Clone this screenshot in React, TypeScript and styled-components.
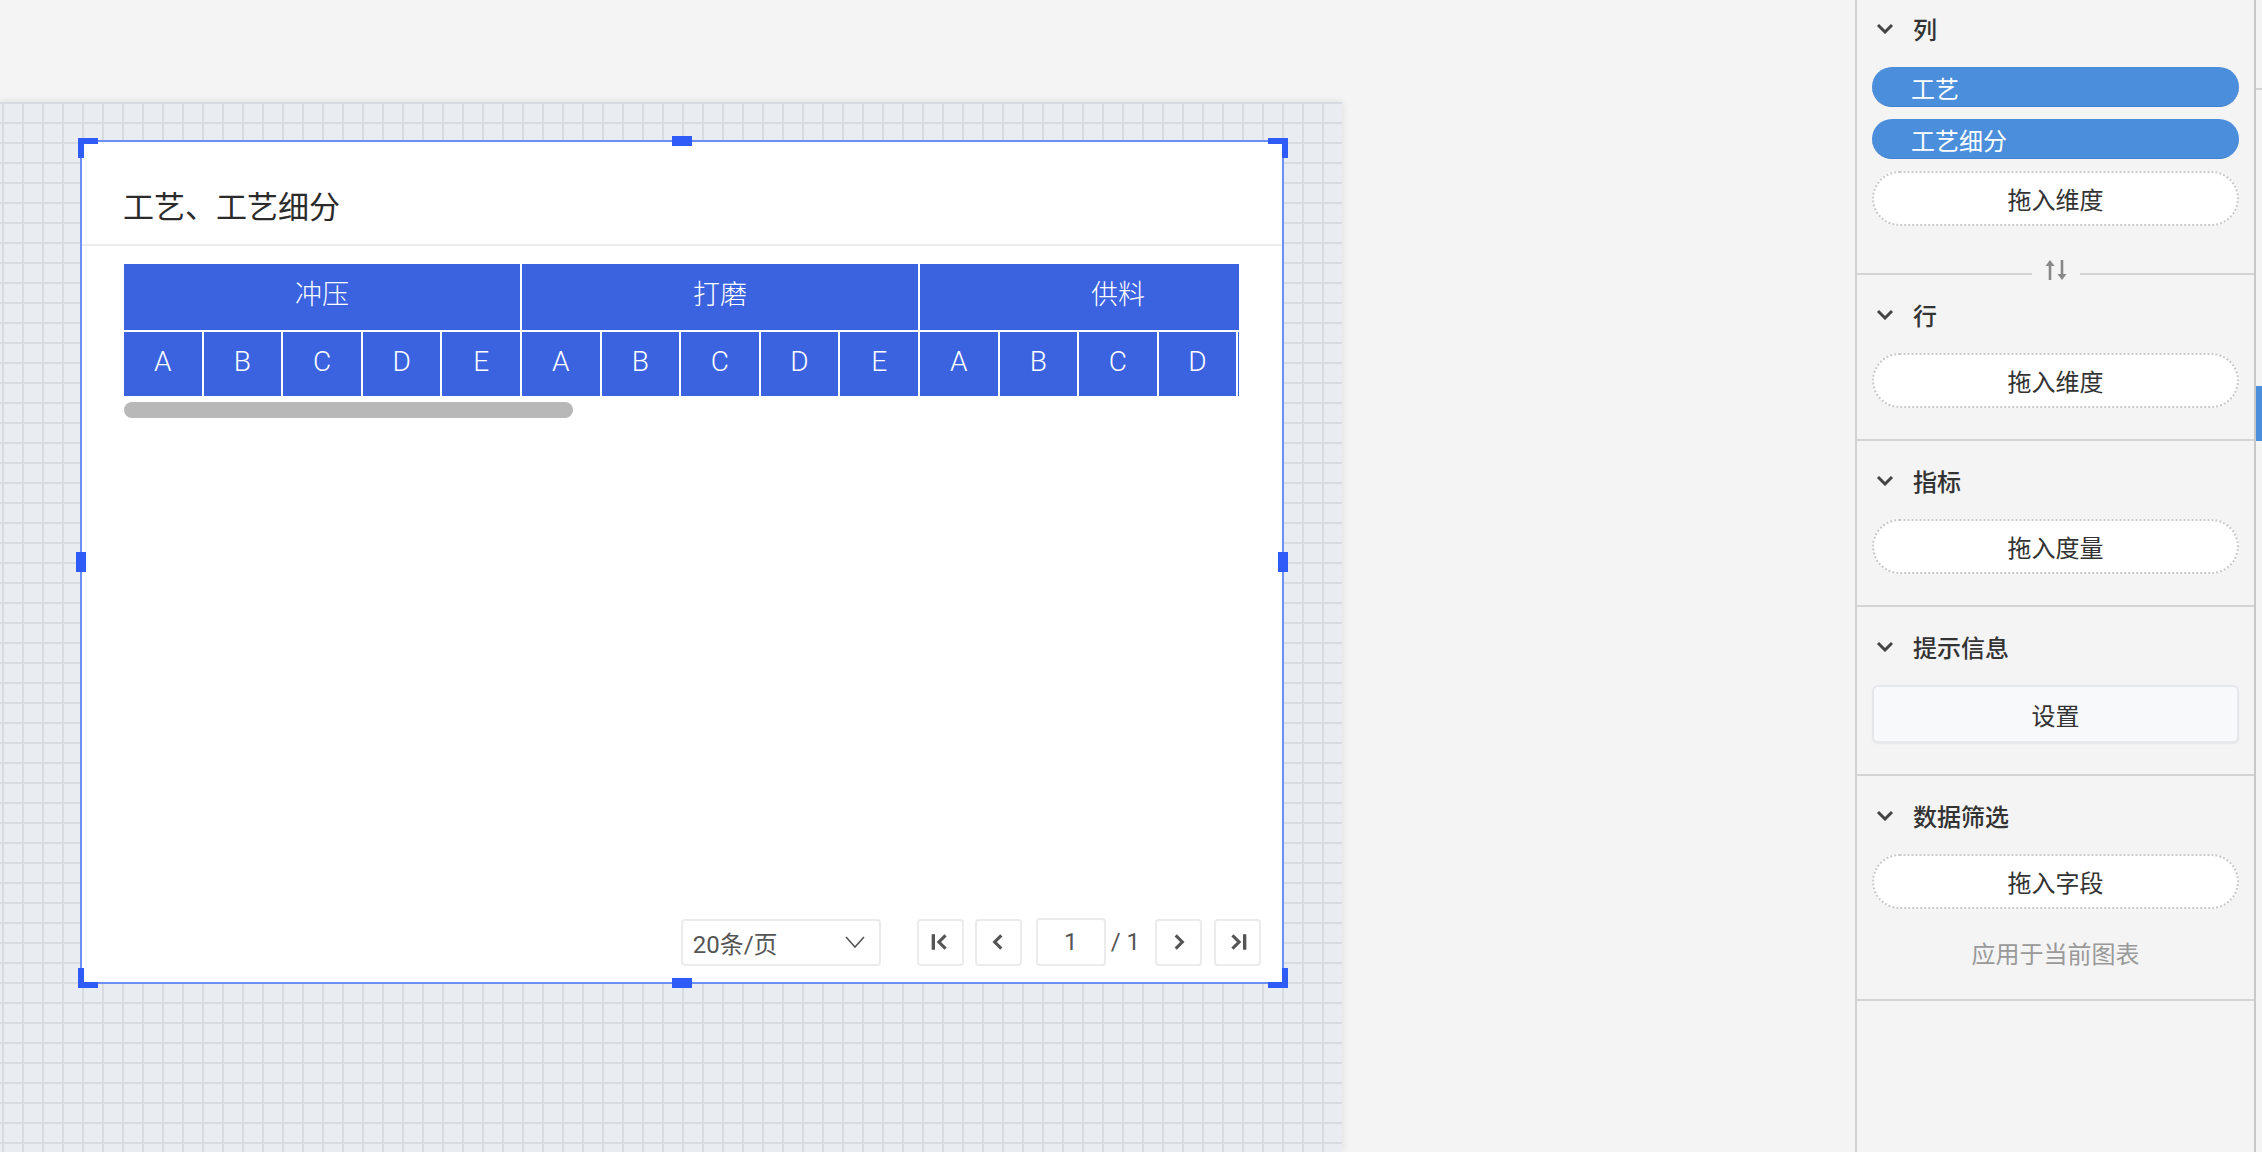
import styled, { createGlobalStyle } from 'styled-components'

const GlobalStyle = createGlobalStyle`
  html, body {
    margin: 0;
    padding: 0;
    background: #f4f4f4;
    font-family: Roboto, "Noto Sans CJK SC", sans-serif;
  }
  * {
    box-sizing: border-box;
  }
`

const Page = styled.div`
  display: flex;
  width: 2262px;
  height: 1152px;
  overflow: hidden;
  background: #f4f4f4;
`

const Workspace = styled.div`
  display: flex;
  flex-direction: column;
  width: 1855px;
`

const TopGap = styled.div`
  height: 102px;
  flex-shrink: 0;
`

const Canvas = styled.div`
  flex: 1;
  width: 1342px;
  padding: 38px 0 0 80px;
  background-color: #e9edf1;
  background-image: linear-gradient(to right, #d8dce1 2px, transparent 2px),
    linear-gradient(to bottom, #d8dce1 2px, transparent 2px);
  background-size: 20px 20px;
  background-position: 2px 0;
  box-shadow: 0 0 8px rgba(0, 0, 0, 0.1);
`

const Widget = styled.div`
  position: relative;
  display: flex;
  flex-direction: column;
  width: 1204px;
  height: 844px;
  background: #fff;
  border: 2px solid #6c8ef5;
`

const Corner = styled.div<{ $v: 'top' | 'bottom'; $h: 'left' | 'right' }>`
  position: absolute;
  width: 20px;
  height: 20px;
  ${({ $v }) => ($v === 'top' ? 'top: -4px;' : 'bottom: -6px;')}
  ${({ $h }) => ($h === 'left' ? 'left: -4px;' : 'right: -6px;')}
  border-${({ $v }) => $v}: 6px solid #2f5cf6;
  border-${({ $h }) => $h}: 6px solid #2f5cf6;
`

const EdgeHandle = styled.div<{ $side: 'top' | 'bottom' | 'left' | 'right' }>`
  position: absolute;
  background: #2f5cf6;
  ${({ $side }) =>
    $side === 'top' || $side === 'bottom'
      ? `width: 20px; height: 10px; left: calc(50% - 10px); ${$side}: -6px;`
      : `width: 10px; height: 20px; top: calc(50% - 10px); ${$side}: -6px;`}
`

const WidgetHeader = styled.div`
  height: 104px;
  flex-shrink: 0;
  padding: 43px 41px 0;
  border-bottom: 2px solid #ececec;
  font-family: "Noto Sans CJK SC", sans-serif;
  font-size: 31px;
  line-height: 40px;
  color: #2b2b2b;
`

const TableArea = styled.div`
  margin: 18px 43px 0 42px;
  overflow: hidden;
`

const HeadRow = styled.div`
  display: flex;
  width: max-content;
`

const GroupCell = styled.div`
  width: 398px;
  height: 68px;
  display: flex;
  align-items: center;
  justify-content: center;
  padding-bottom: 9px;
  background: #3b63e0;
  border-right: 2px solid #fff;
  border-bottom: 2px solid #fff;
  color: #fff;
  font-family: "Noto Sans CJK SC", sans-serif;
  font-size: 27px;
  font-weight: 300;
`

const LeafCell = styled.div`
  width: 79.6px;
  height: 64px;
  display: flex;
  align-items: center;
  justify-content: center;
  padding-bottom: 5px;
  background: #3b63e0;
  border-right: 2px solid #fff;
  color: #fff;
  font-family: Roboto, sans-serif;
  font-size: 28px;
  font-weight: 300;
`

const ScrollThumb = styled.div`
  width: 449px;
  height: 16px;
  margin: 6px 0 0 42px;
  border-radius: 8px;
  background: #b8b8b8;
`

const Pager = styled.div`
  margin-top: auto;
  display: flex;
  align-items: center;
  justify-content: flex-end;
  padding: 0 21px 16px 0;
  color: #555;
`

const SizeSelect = styled.div`
  width: 200px;
  height: 47px;
  display: flex;
  align-items: center;
  justify-content: space-between;
  padding: 0 14px 0 10px;
  border: 2px solid #ebebeb;
  border-radius: 4px;
  font-family: Roboto, "Noto Sans CJK SC", sans-serif;
  font-size: 24px;
  color: #555;
`

const PageButton = styled.div<{ $gap?: number }>`
  width: 47px;
  height: 47px;
  margin-left: ${({ $gap }) => $gap ?? 12}px;
  display: flex;
  align-items: center;
  justify-content: center;
  border: 2px solid #ebebeb;
  border-radius: 4px;
`

const PageInput = styled.div`
  width: 70px;
  height: 48px;
  margin-left: 14px;
  display: flex;
  align-items: center;
  justify-content: center;
  border: 2px solid #ebebeb;
  border-radius: 4px;
  font-size: 24px;
  color: #555;
`

const PageTotal = styled.span`
  margin: 0 3px 0 5px;
  font-size: 24px;
  color: #555;
`

const Panel = styled.div`
  width: 401px;
  height: 100%;
  background: #f4f4f4;
  border-left: 2px solid #d2d2d2;
  border-right: 2px solid #c8c8c8;
  overflow: hidden;
`

const PanelBody = styled.div`
  margin-top: -11px;
`

const Section = styled.div<{ $tail?: number }>`
  position: relative;
  padding: 0 15px ${({ $tail }) => $tail ?? 31}px;
  border-bottom: 2px solid #d4d4d4;
`

const SectionHead = styled.div`
  height: 78px;
  display: flex;
  align-items: center;
  padding-left: 4px;
  gap: 19px;
  font-family: "Noto Sans CJK SC", sans-serif;
  font-size: 24px;
  font-weight: 500;
  color: #333;
`

const FieldPill = styled.div`
  height: 40px;
  margin-bottom: 12px;
  padding: 2px 0 0 39px;
  display: flex;
  align-items: center;
  border-radius: 20px;
  background: #4b8edb;
  border-bottom: 1px solid #4282cc;
  color: #fff;
  font-family: "Noto Sans CJK SC", sans-serif;
  font-size: 24px;
`

const DropZone = styled.div`
  height: 55px;
  display: flex;
  align-items: center;
  justify-content: center;
  border: 2px dotted #c9c9c9;
  border-radius: 28px;
  background: #fff;
  font-family: "Noto Sans CJK SC", sans-serif;
  font-size: 24px;
  color: #333;
`

const SetButton = styled.div`
  height: 58px;
  display: flex;
  align-items: center;
  justify-content: center;
  border: 2px solid #e5e7eb;
  border-radius: 6px;
  background: #f8f9fb;
  box-shadow: 0 1px 2px rgba(0, 0, 0, 0.06);
  font-family: "Noto Sans CJK SC", sans-serif;
  font-size: 24px;
  color: #333;
`

const Hint = styled.div`
  padding: 32px 0 3px;
  text-align: center;
  line-height: 24px;
  font-family: "Noto Sans CJK SC", sans-serif;
  font-size: 24px;
  color: #999;
`

const SwapBadge = styled.div`
  position: absolute;
  left: calc(50% - 24px);
  bottom: -8px;
  width: 48px;
  height: 22px;
  display: flex;
  justify-content: center;
  background: #f4f4f4;
`

const Strip = styled.div`
  position: relative;
  width: 6px;
  height: 100%;
  background: #f4f4f4;
`

const StripLine = styled.div`
  margin-top: 88px;
  height: 2px;
  background: #d4d4d4;
`

const StripMark = styled.div`
  position: absolute;
  top: 386px;
  left: 0;
  width: 6px;
  height: 55px;
  background: #4b8edb;
`

const Chevron = () => (
  <svg width="18" height="11" viewBox="0 0 18 11">
    <path d="M2 2 L9 9 L16 2" fill="none" stroke="#444" strokeWidth="3" />
  </svg>
)

const SelectArrow = () => (
  <svg width="20" height="12" viewBox="0 0 20 12">
    <path d="M1 1 L10 11 L19 1" fill="none" stroke="#555" strokeWidth="1.6" />
  </svg>
)

const PagerIcon = ({ d, bar }: { d: string; bar?: number }) => (
  <svg width="20" height="18" viewBox="0 0 18 16">
    {bar !== undefined && (
      <path d={`M${bar} 1 V15`} stroke="#555" strokeWidth="3" />
    )}
    <path d={d} fill="none" stroke="#555" strokeWidth="2.8" />
  </svg>
)

const SwapIcon = () => (
  <svg width="26" height="22" viewBox="0 0 26 22">
    <path d="M7 5 V21" stroke="#888" strokeWidth="2.6" />
    <path d="M2.5 7 L7 1 L11.5 7 Z" fill="#888" />
    <path d="M19 1 V17" stroke="#888" strokeWidth="2.6" />
    <path d="M14.5 15 L19 21 L23.5 15 Z" fill="#888" />
  </svg>
)

const groups = ['冲压', '打磨', '供料']
const leaves = ['A', 'B', 'C', 'D', 'E']

const App = () => {
  return (
    <Page>
      <GlobalStyle />
      <Workspace>
        <TopGap />
        <Canvas>
          <Widget>
            <Corner $v="top" $h="left" />
            <Corner $v="top" $h="right" />
            <Corner $v="bottom" $h="left" />
            <Corner $v="bottom" $h="right" />
            <EdgeHandle $side="top" />
            <EdgeHandle $side="bottom" />
            <EdgeHandle $side="left" />
            <EdgeHandle $side="right" />

            <WidgetHeader>工艺、工艺细分</WidgetHeader>

            <TableArea>
              <HeadRow>
                {groups.map((g) => (
                  <GroupCell key={g}>{g}</GroupCell>
                ))}
              </HeadRow>
              <HeadRow>
                {groups.map((g) =>
                  leaves.map((l) => <LeafCell key={g + l}>{l}</LeafCell>)
                )}
              </HeadRow>
            </TableArea>
            <ScrollThumb />

            <Pager>
              <SizeSelect>
                20条/页
                <SelectArrow />
              </SizeSelect>
              <PageButton $gap={36}>
                <PagerIcon bar={3} d="M14 2 L8 8 L14 14" />
              </PageButton>
              <PageButton $gap={11}>
                <PagerIcon d="M12 2 L6 8 L12 14" />
              </PageButton>
              <PageInput>1</PageInput>
              <PageTotal>/ 1</PageTotal>
              <PageButton $gap={12}>
                <PagerIcon d="M6 2 L12 8 L6 14" />
              </PageButton>
              <PageButton $gap={12}>
                <PagerIcon bar={15} d="M4 2 L10 8 L4 14" />
              </PageButton>
            </Pager>
          </Widget>
        </Canvas>
      </Workspace>

      <Panel>
        <PanelBody>
          <Section $tail={47}>
            <SectionHead>
              <Chevron />
              列
            </SectionHead>
            <FieldPill>工艺</FieldPill>
            <FieldPill>工艺细分</FieldPill>
            <DropZone>拖入维度</DropZone>
            <SwapBadge>
              <SwapIcon />
            </SwapBadge>
          </Section>

          <Section>
            <SectionHead>
              <Chevron />
              行
            </SectionHead>
            <DropZone>拖入维度</DropZone>
          </Section>

          <Section>
            <SectionHead>
              <Chevron />
              指标
            </SectionHead>
            <DropZone>拖入度量</DropZone>
          </Section>

          <Section>
            <SectionHead>
              <Chevron />
              提示信息
            </SectionHead>
            <SetButton>设置</SetButton>
          </Section>

          <Section>
            <SectionHead>
              <Chevron />
              数据筛选
            </SectionHead>
            <DropZone>拖入字段</DropZone>
            <Hint>应用于当前图表</Hint>
          </Section>
        </PanelBody>
      </Panel>

      <Strip>
        <StripLine />
        <StripMark />
      </Strip>
    </Page>
  )
}

export default App
